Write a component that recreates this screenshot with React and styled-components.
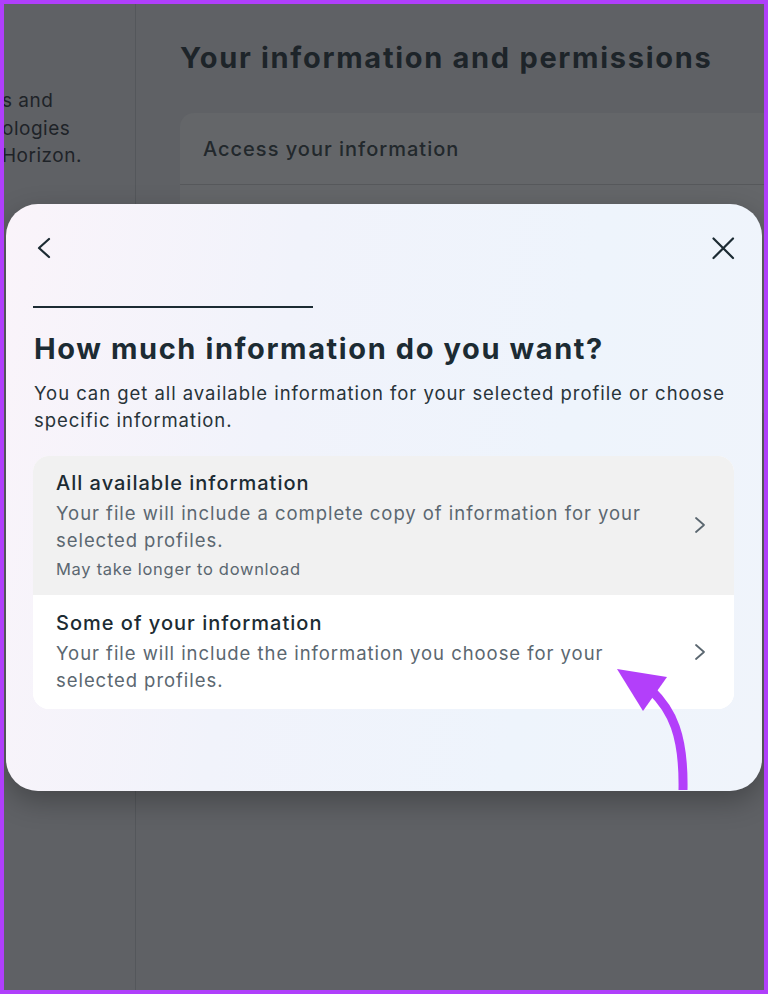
import React from "react";
import styled, { createGlobalStyle } from "styled-components";

const GlobalStyle = createGlobalStyle`
  * { box-sizing: border-box; }
  html, body { margin: 0; padding: 0; background: #5f6165; }
  body { font-family: Inter, "Noto Sans", "Liberation Sans", sans-serif; }
`;

const Frame = styled.div`
  position: relative;
  width: 768px;
  height: 994px;
  border: 4px solid #b03ffb;
  background: #5f6165;
  overflow: hidden;
`;

const Page = styled.div`
  display: flex;
  height: 100%;
`;

const Sidebar = styled.aside`
  width: 132px;
  flex-shrink: 0;
  border-right: 1px solid #54575b;
  padding-top: 83px;
  overflow: hidden;
`;

const SideText = styled.p`
  margin: 0 0 0 -2px;
  font-size: 19px;
  line-height: 27.5px;
  color: #1e2328;
  white-space: nowrap;
  letter-spacing: 0.5px;
`;

const Main = styled.main`
  flex: 1;
  padding: 34px 0 0 44px;
`;

const PageTitle = styled.h1`
  margin: 0 0 35px;
  font-size: 29px;
  font-weight: 700;
  line-height: 40px;
  color: #1d2429;
  letter-spacing: 1.7px;
`;

const PageCard = styled.div`
  background: #646669;
  border-radius: 14px 0 0 14px;
  height: 300px;
`;

const PageCardHead = styled.div`
  padding: 0 23px;
  height: 72px;
  display: flex;
  align-items: center;
  font-size: 20px;
  font-weight: 500;
  color: #22282c;
  letter-spacing: 1px;
  border-bottom: 1px solid #56585b;
`;

const Overlay = styled.div`
  position: absolute;
  inset: 0;
  padding: 200px 2px 0;
`;

const Modal = styled.section`
  background: linear-gradient(100deg, #faf4fa 0%, #f1f3fb 35%, #eef4fc 70%, #f0f4fb 100%);
  border-radius: 32px;
  padding: 32px 28px 82px;
  box-shadow: 0 10px 28px rgba(0, 0, 0, 0.28);
`;

const HeaderRow = styled.div`
  display: flex;
  justify-content: space-between;
  align-items: center;
  height: 24px;
`;

const IconButton = styled.button`
  width: 24px;
  height: 24px;
  padding: 0;
  border: none;
  background: none;
  color: #1c2b33;
  display: flex;
  margin-left: ${(p) => p.$shift || 0}px;
  margin-right: ${(p) => p.$pull || 0}px;
`;

const Progress = styled.div`
  width: 280px;
  height: 2px;
  background: #1c2b33;
  margin: 46px 0 0 -1px;
`;

const Heading = styled.h2`
  margin: 23px 0 13px;
  font-size: 29px;
  font-weight: 700;
  line-height: 36px;
  color: #1c2b33;
  letter-spacing: 1.6px;
`;

const Lead = styled.p`
  margin: 0 0 22px;
  font-size: 18.5px;
  line-height: 27px;
  color: #283339;
  letter-spacing: 0.95px;
`;

const Options = styled.div`
  border-radius: 16px;
  overflow: hidden;
  background: #fff;
  margin: 0 0 0 -1px;
`;

const Option = styled.div`
  display: flex;
  align-items: center;
  padding: ${(p) => (p.$active ? "14px 27px 15px 23px" : "15px 27px 15px 23px")};
  background: ${(p) => (p.$active ? "#f1f1f1" : "#ffffff")};
`;

const OptionBody = styled.div`
  flex: 1;
  padding-right: 36px;
`;

const OptionTitle = styled.div`
  font-size: 20px;
  font-weight: 500;
  line-height: 26px;
  color: #1c2b33;
  letter-spacing: 1px;
  margin-bottom: 4px;
`;

const OptionText = styled.div`
  font-size: 18.5px;
  line-height: 27px;
  color: #5b6770;
  letter-spacing: 0.95px;
`;

const OptionNote = styled.div`
  font-size: 16.5px;
  line-height: 22px;
  color: #5b6770;
  letter-spacing: 0.7px;
  margin-top: 4px;
`;

const Chevron = styled.svg`
  width: 14px;
  height: 18px;
  flex-shrink: 0;
  color: #5b6770;
`;

const Annotation = styled.svg`
  position: absolute;
  left: -4px;
  top: -4px;
  width: 768px;
  height: 994px;
  pointer-events: none;
`;

const options = [
  {
    title: "All available information",
    text: "Your file will include a complete copy of information for your selected profiles.",
    note: "May take longer to download",
    active: true,
  },
  {
    title: "Some of your information",
    text: "Your file will include the information you choose for your selected profiles.",
  },
];

export default function App() {
  return (
    <>
      <GlobalStyle />
      <Frame>
        <Page>
          <Sidebar>
            <SideText>s and</SideText>
            <SideText>ologies</SideText>
            <SideText>Horizon.</SideText>
          </Sidebar>
          <Main>
            <PageTitle>Your information and permissions</PageTitle>
            <PageCard>
              <PageCardHead>Access your information</PageCardHead>
            </PageCard>
          </Main>
        </Page>

        <Overlay>
          <Modal>
            <HeaderRow>
              <IconButton $shift={1} aria-label="Back">
                <svg width="24" height="24" viewBox="0 0 24 24" fill="none" stroke="currentColor" strokeWidth="2.2" strokeLinecap="round" strokeLinejoin="round">
                  <path d="M14 3 L4 12 L14 21" />
                </svg>
              </IconButton>
              <IconButton $pull={-1} aria-label="Close">
                <svg width="24" height="24" viewBox="0 0 24 24" fill="none" stroke="currentColor" strokeWidth="2.2" strokeLinecap="round">
                  <path d="M2.5 2.5 L22 22 M22 2.5 L2.5 22" />
                </svg>
              </IconButton>
            </HeaderRow>
            <Progress />
            <Heading>How much information do you want?</Heading>
            <Lead>
              You can get all available information for your selected profile or choose specific information.
            </Lead>
            <Options>
              {options.map((o) => (
                <Option key={o.title} $active={o.active}>
                  <OptionBody>
                    <OptionTitle>{o.title}</OptionTitle>
                    <OptionText>{o.text}</OptionText>
                    {o.note && <OptionNote>{o.note}</OptionNote>}
                  </OptionBody>
                  <Chevron viewBox="0 0 14 18" fill="none" stroke="currentColor" strokeWidth="1.8" strokeLinecap="round" strokeLinejoin="round">
                    <path d="M3 2 L11 9 L3 16" />
                  </Chevron>
                </Option>
              ))}
            </Options>
          </Modal>
        </Overlay>

        <Annotation viewBox="0 0 768 994">
          <path d="M651 690 C672 710 684 735 683 790" fill="none" stroke="#b33ffa" strokeWidth="9" />
          <path d="M617 669 L667 677 L643 711 Z" fill="#b33ffa" />
        </Annotation>
      </Frame>
    </>
  );
}
